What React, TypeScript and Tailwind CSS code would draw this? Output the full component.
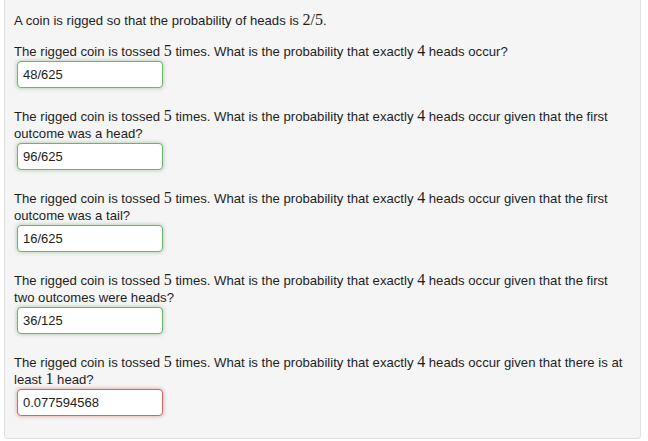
import React from "react";

const M = ({ children }: { children: React.ReactNode }) => (
  <span className="font-['Liberation_Serif','DejaVu_Serif',serif] text-[16px] leading-[0]">{children}</span>
);

const Field = ({ value, ok }: { value: string; ok: boolean }) => (
  <div
    className={
      "mt-px ml-[3px] h-[27px] w-[146px] rounded-[4px] border bg-white px-[5px] flex items-center text-[13px] text-[#222] " +
      (ok
        ? "border-[#6cb46c] shadow-[0_0_4px_rgba(60,140,60,0.45)]"
        : "border-[#d06868] shadow-[0_0_4px_rgba(180,50,50,0.45)]")
    }
  >
    {value}
  </div>
);

export default function App() {
  return (
    <div className="min-h-[441px] bg-white font-['Liberation_Sans',Arial,sans-serif]">
      <div className="ml-[4px] w-[637px] rounded-b-[4px] border border-t-0 border-[#e0e0e0] bg-[#f5f5f5] pl-[9px] pr-[14px] pt-[12px] pb-[22px] text-[13.15px] leading-[17px] text-[#1e1e1e]">
        <p>
          A coin is rigged so that the probability of heads is <M>2/5</M>.
        </p>
        <div className="mt-[14px]">
          <p>
            The rigged coin is tossed <M>5</M> times. What is the probability that exactly <M>4</M> heads occur?
          </p>
          <Field value="48/625" ok />
        </div>
        <div className="mt-[20px]">
          <p>
            The rigged coin is tossed <M>5</M> times. What is the probability that exactly <M>4</M> heads occur given that the first outcome was a head?
          </p>
          <Field value="96/625" ok />
        </div>
        <div className="mt-[20px]">
          <p>
            The rigged coin is tossed <M>5</M> times. What is the probability that exactly <M>4</M> heads occur given that the first outcome was a tail?
          </p>
          <Field value="16/625" ok />
        </div>
        <div className="mt-[20px]">
          <p>
            The rigged coin is tossed <M>5</M> times. What is the probability that exactly <M>4</M> heads occur given that the first two outcomes were heads?
          </p>
          <Field value="36/125" ok />
        </div>
        <div className="mt-[20px]">
          <p>
            The rigged coin is tossed <M>5</M> times. What is the probability that exactly <M>4</M> heads occur given that there is at least <M>1</M> head?
          </p>
          <Field value="0.077594568" ok={false} />
        </div>
      </div>
    </div>
  );
}
